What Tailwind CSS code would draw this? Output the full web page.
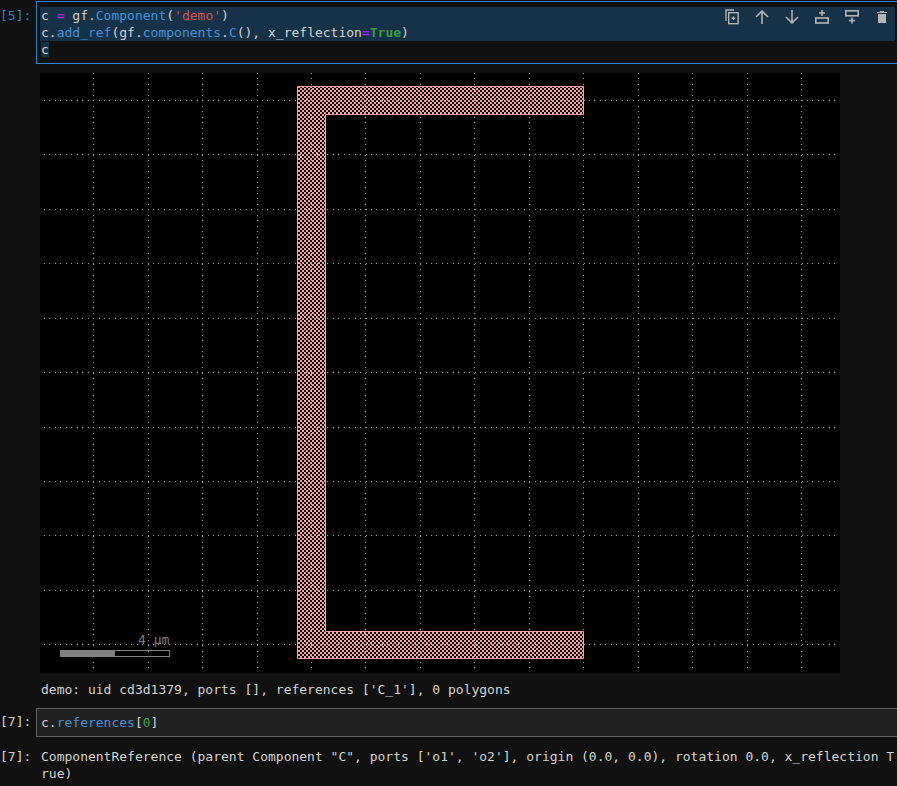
<!DOCTYPE html>
<html lang="en">

<head>
    <meta charset="UTF-8">
    <title>demo</title>
    <script src="https://cdn.jsdelivr.net/npm/@tailwindcss/browser@4"></script>
</head>

<body class="bg-[#111111]">
    <div class="w-[897px] h-[786px] overflow-hidden font-['DejaVu_Sans_Mono',monospace] text-[13px] leading-[17px] text-[#d4d4d4]">

        <!-- code cell -->
        <div class="flex pt-[1px]">
            <div class="w-[36px] shrink-0 pt-[6px] text-[#307fc1]">[5]:</div>
            <div class="relative w-[870px] shrink-0 h-[63px] border border-[#2f84c5] pl-[3px] pt-[5px]">
                <div class="w-[855px] bg-[#163249] pl-[1px]">c <span class="font-bold text-[#aa22ff]">=</span> gf.<span class="text-[#4592d8]">Component</span>(<span class="text-[#d9534f]">'demo'</span>)</div>
                <div class="w-[855px] bg-[#163249] pl-[1px]">c.<span class="text-[#4592d8]">add_ref</span>(gf.<span class="text-[#4592d8]">components</span>.<span class="text-[#4592d8]">C</span>(), x_reflection<span class="font-bold text-[#aa22ff]">=</span><span class="font-bold text-[#3d9d3d]">True</span>)</div>
                <div class="pl-[1px]"><span class="bg-[#163249]">c</span></div>

                <!-- cell toolbar -->
                <div class="absolute top-[5px] left-[680px] flex text-[#b5b5b5]">
                    <button class="w-[30px] h-[20px] flex items-center justify-center">
                        <svg width="14" height="16" viewBox="0 0 14 16" fill="none" stroke="currentColor" stroke-width="1.4">
                            <path d="M1 12V1h8" />
                            <rect x="3.7" y="3.7" width="9.4" height="11" />
                            <path d="M8.4 7.5v3.6M6.6 9.3h3.6" />
                        </svg>
                    </button>
                    <button class="w-[30px] h-[20px] flex items-center justify-center">
                        <svg width="14" height="14" viewBox="0 0 14 14" fill="none" stroke="currentColor" stroke-width="1.6">
                            <path d="M7 14V1M1 7l6-6 6 6" />
                        </svg>
                    </button>
                    <button class="w-[30px] h-[20px] flex items-center justify-center">
                        <svg width="14" height="14" viewBox="0 0 14 14" fill="none" stroke="currentColor" stroke-width="1.6">
                            <path d="M7 0v13M1 7l6 6 6-6" />
                        </svg>
                    </button>
                    <button class="w-[30px] h-[20px] flex items-center justify-center">
                        <svg width="14" height="14" viewBox="0 0 14 14" fill="none" stroke="currentColor" stroke-width="1.6">
                            <rect x="0.8" y="8" width="12.4" height="5" />
                            <path d="M7 0v6M4 3h6" />
                        </svg>
                    </button>
                    <button class="w-[30px] h-[20px] flex items-center justify-center">
                        <svg width="14" height="14" viewBox="0 0 14 14" fill="none" stroke="currentColor" stroke-width="1.6">
                            <rect x="0.8" y="0.8" width="12.4" height="5" />
                            <path d="M7 7.500v6M4 10.500h6" />
                        </svg>
                    </button>
                    <button class="w-[30px] h-[20px] flex items-center justify-center">
                        <svg width="10" height="12" viewBox="0 0 10 12" fill="currentColor">
                            <path d="M0 1h3V0h4v1h3v1H0zM1 3h8v9H1z" />
                        </svg>
                    </button>
                </div>
            </div>
        </div>

        <!-- layout plot -->
        <div class="ml-[40px] mt-[9px] w-[800px] h-[600px] bg-black">
            <svg width="800" height="600" viewBox="40 73 800 600" class="block">
                <defs>
                    <pattern id="hatch" width="4" height="4" patternUnits="userSpaceOnUse">
                        <rect width="4" height="4" fill="#000000" />
                        <rect width="2" height="2" fill="#ffa0a0" />
                        <rect x="2" y="2" width="2" height="2" fill="#ffa0a0" />
                    </pattern>
                </defs>
                <path fill="url(#hatch)" stroke="#ffa0a0" d="M297.500 86.500H583.500V114.500H325.500V631.500H583.500V658.500H297.500Z" />
                <g id="grid" stroke="#a8a8a8" stroke-dasharray="1 4.450" fill="none" shape-rendering="crispEdges"></g>
                <rect x="60.500" y="650.500" width="109" height="6" fill="none" stroke="#808080" />
                <rect x="60" y="650" width="55" height="7" fill="#808080" />
                <text x="138" y="644" fill="#808080" font-size="13">4 µm</text>
            </svg>
        </div>

        <div class="ml-[41px] mt-[8px]">demo: uid cd3d1379, ports [], references ['C_1'], 0 polygons</div>

        <!-- second cell -->
        <div class="flex mt-[10px]">
            <div class="w-[36px] shrink-0 pt-[5px]">[7]:</div>
            <div class="w-[870px] shrink-0 h-[29px] bg-[#212121] border border-[#616161] pl-[4px] pt-[5px]">c.<span class="text-[#4592d8]">references</span>[<span class="text-[#3d9d3d]">0</span>]</div>
        </div>

        <div class="flex mt-[11px]">
            <div class="w-[41px] shrink-0">[7]:</div>
            <div class="w-[856px] break-all">ComponentReference (parent Component "C", ports ['o1', 'o2'], origin (0.0, 0.0), rotation 0.0, x_reflection True)</div>
        </div>
    </div>

    <script>
        //grid lines of the plot
        const grid = document.getElementById("grid")
        const xs = [93, 148, 202, 257, 311, 365, 420, 474, 529, 583, 638, 692, 747, 801]
        const ys = [100, 154, 209, 263, 318, 372, 427, 481, 535, 590, 644]
        let str = ""
        xs.forEach(x => {
            str += `<path d="M${x + 0.5} 73V673" />`
        })
        ys.forEach(y => {
            str += `<path d="M44 ${y + 0.5}H840" />`
        })
        grid.innerHTML = str
    </script>
</body>

</html>
